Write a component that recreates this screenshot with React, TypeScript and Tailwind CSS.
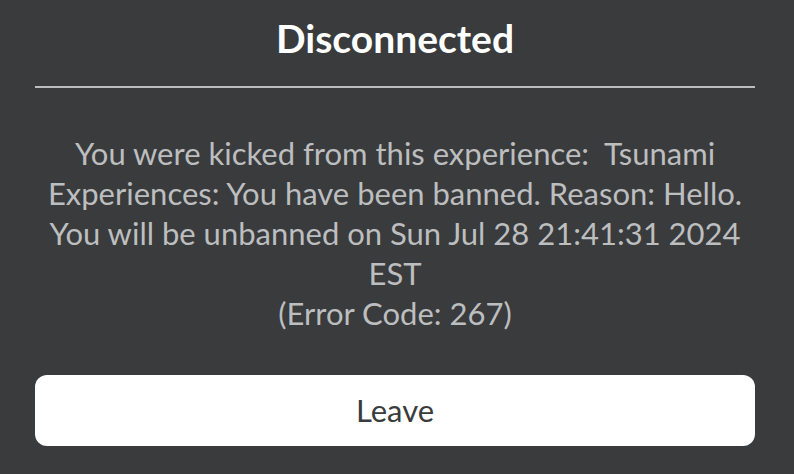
export default function App() {
  return (
    <div className="flex h-[474px] w-[794px] flex-col items-center bg-[#393b3d] pl-[35px] pr-[39px] font-['Lato',sans-serif]">
      <h1 className="pt-[14px] text-[39px] font-bold leading-[48px] text-white">
        Disconnected
      </h1>
      <div className="mt-[24px] h-[2px] w-full bg-[#bdbdbd]" />
      <p className="mt-[45px] text-center text-[31px] leading-[40px] text-[#bdbebf]">
        You were kicked from this experience:&nbsp; Tsunami
        <br />
        Experiences: You have been banned. Reason: Hello.
        <br />
        You will be unbanned on Sun Jul 28 21:41:31 2024
        <br />
        EST
        <br />
        (Error Code: 267)
      </p>
      <button
        type="button"
        className="mt-[42px] flex h-[71px] w-full items-center justify-center rounded-[12px] bg-white text-[31px] text-[#393b3d]"
      >
        Leave
      </button>
    </div>
  )
}
